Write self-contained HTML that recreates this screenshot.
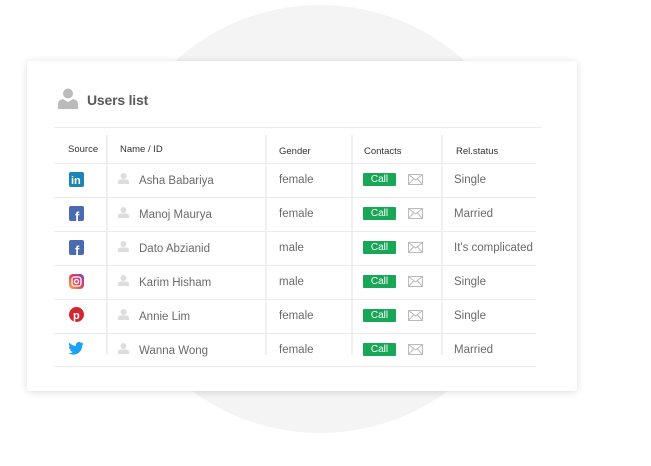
<!DOCTYPE html>
<html><head><style>
*{margin:0;padding:0;box-sizing:border-box}
body{width:651px;height:466px;background:#fff;position:relative;overflow:hidden;font-family:"Liberation Sans",sans-serif}
.circle{position:absolute;left:105px;top:5px;width:430px;height:428px;border-radius:50%;background:#f4f4f4}
.card{position:absolute;left:27px;top:61px;width:550px;height:330px;background:#fff;border-radius:3px;box-shadow:0 1px 8px rgba(0,0,0,.14)}
.abs{position:absolute}
.title{left:87px;top:92px;font-size:14px;color:#5a5a5a;font-weight:bold;letter-spacing:-.2px}
.hl{position:absolute;height:1px;background:#ececec}
.vl{position:absolute;width:2px;background:#f0f0f0;top:135px;height:220px}
.th{position:absolute;top:144px;font-size:9.5px;color:#333}
.td{position:absolute;font-size:11.5px;color:#6a6a6a;margin-top:2px}
.call{position:absolute;left:363px;width:33px;height:13px;background:#17a757;color:#fff;font-size:10px;text-align:center;line-height:14px;border-radius:1px}
.pi{position:absolute;left:118px}
.env{position:absolute;left:408px}
</style></head><body>
<div class="circle"></div>
<div class="card"></div>
<svg class="abs" style="left:58px;top:88px" width="20" height="21" viewBox="0 0 20 21"><circle cx="10" cy="5.5" r="5" fill="#bbb"/><path d="M0 21 V16 Q0 12 5 11 L10 14 L15 11 Q20 12 20 16 V21Z" fill="#bbb"/></svg>
<div class="abs title">Users list</div>
<div class="hl" style="left:54px;top:127px;width:487px"></div>
<div class="vl" style="left:106px"></div><div class="vl" style="left:265px"></div><div class="vl" style="left:351px"></div><div class="vl" style="left:441px"></div>
<div class="th" style="left:68px">Source</div>
<div class="th" style="left:120px">Name / ID</div>
<div class="th" style="left:279px;top:146px">Gender</div>
<div class="th" style="left:364px;top:146px">Contacts</div>
<div class="th" style="left:456px;top:146px">Rel.status</div>
<div class="hl" style="left:54px;top:163px;width:482px"></div>
<div class="hl" style="left:54px;top:197px;width:482px"></div>
<div class="hl" style="left:54px;top:231px;width:482px"></div>
<div class="hl" style="left:54px;top:265px;width:482px"></div>
<div class="hl" style="left:54px;top:299px;width:482px"></div>
<div class="hl" style="left:54px;top:333px;width:482px"></div>
<div class="hl" style="left:54px;top:366px;width:482px"></div>

<svg class="abs" style="left:69px;top:172px" width="15" height="15"><rect width="15" height="15" rx="2" fill="#1b86b5"/><text x="2" y="12" font-size="11" font-weight="bold" fill="#fff" font-family="Liberation Sans">in</text></svg>
<svg class="abs" style="left:69px;top:206px" width="15" height="15"><rect width="15" height="15" rx="2" fill="#4a6bb1"/><text x="6" y="15" font-size="13" font-weight="bold" fill="#fff" font-family="Liberation Sans">f</text></svg>
<svg class="abs" style="left:69px;top:240px" width="15" height="15"><rect width="15" height="15" rx="2" fill="#4a6bb1"/><text x="6" y="15" font-size="13" font-weight="bold" fill="#fff" font-family="Liberation Sans">f</text></svg>
<svg class="abs" style="left:69px;top:274px" width="15" height="15"><defs><linearGradient id="ig" x1="0" y1="1" x2="1" y2="0"><stop offset="0" stop-color="#fdb44a"/><stop offset=".5" stop-color="#e4405f"/><stop offset="1" stop-color="#7a3fc2"/></linearGradient></defs><rect width="15" height="15" rx="4" fill="url(#ig)"/><rect x="3" y="3" width="9" height="9" rx="2.5" fill="none" stroke="#fff" stroke-width="1.3"/><circle cx="7.5" cy="7.5" r="2" fill="none" stroke="#fff" stroke-width="1.3"/></svg>
<svg class="abs" style="left:69px;top:307px" width="15" height="15"><circle cx="7.5" cy="7.5" r="7.5" fill="#d22630"/><text x="4" y="12" font-size="11" font-weight="bold" fill="#fff" font-family="Liberation Sans">p</text></svg>
<svg class="abs" style="left:68px;top:342px" width="16" height="13" viewBox="0 0 24 20"><path d="M24 2.4a9.8 9.8 0 0 1-2.8.8A4.9 4.9 0 0 0 23.3.4a9.9 9.9 0 0 1-3.1 1.2A4.9 4.9 0 0 0 11.8 6 14 14 0 0 1 1.7.9a4.9 4.9 0 0 0 1.5 6.6A4.9 4.9 0 0 1 1 6.9a4.9 4.9 0 0 0 3.9 4.8 4.9 4.9 0 0 1-2.2.1 4.9 4.9 0 0 0 4.6 3.4A9.9 9.9 0 0 1 0 17.2 14 14 0 0 0 7.5 19.5c9.1 0 14-7.5 14-14v-.6A10 10 0 0 0 24 2.4z" fill="#1da1f2"/></svg>

<svg class="pi" style="top:173px" width="11" height="11"><circle cx="5.5" cy="3" r="3" fill="#ddd"/><path d="M0 11V9Q0 6.5 3 6.5H8Q11 6.5 11 9V11Z" fill="#ddd"/></svg>
<svg class="pi" style="top:207px" width="11" height="11"><circle cx="5.5" cy="3" r="3" fill="#ddd"/><path d="M0 11V9Q0 6.5 3 6.5H8Q11 6.5 11 9V11Z" fill="#ddd"/></svg>
<svg class="pi" style="top:241px" width="11" height="11"><circle cx="5.5" cy="3" r="3" fill="#ddd"/><path d="M0 11V9Q0 6.5 3 6.5H8Q11 6.5 11 9V11Z" fill="#ddd"/></svg>
<svg class="pi" style="top:275px" width="11" height="11"><circle cx="5.5" cy="3" r="3" fill="#ddd"/><path d="M0 11V9Q0 6.5 3 6.5H8Q11 6.5 11 9V11Z" fill="#ddd"/></svg>
<svg class="pi" style="top:309px" width="11" height="11"><circle cx="5.5" cy="3" r="3" fill="#ddd"/><path d="M0 11V9Q0 6.5 3 6.5H8Q11 6.5 11 9V11Z" fill="#ddd"/></svg>
<svg class="pi" style="top:343px" width="11" height="11"><circle cx="5.5" cy="3" r="3" fill="#ddd"/><path d="M0 11V9Q0 6.5 3 6.5H8Q11 6.5 11 9V11Z" fill="#ddd"/></svg>

<div class="td" style="left:139px;top:173px">Asha Babariya</div>
<div class="td" style="left:139px;top:207px">Manoj Maurya</div>
<div class="td" style="left:139px;top:241px">Dato Abzianid</div>
<div class="td" style="left:139px;top:275px">Karim Hisham</div>
<div class="td" style="left:139px;top:309px">Annie Lim</div>
<div class="td" style="left:139px;top:343px">Wanna Wong</div>

<div class="td" style="left:279px;top:172px">female</div>
<div class="td" style="left:279px;top:206px">female</div>
<div class="td" style="left:279px;top:240px">male</div>
<div class="td" style="left:279px;top:274px">male</div>
<div class="td" style="left:279px;top:308px">female</div>
<div class="td" style="left:279px;top:342px">female</div>

<div class="call" style="top:173px">Call</div>
<div class="call" style="top:207px">Call</div>
<div class="call" style="top:241px">Call</div>
<div class="call" style="top:275px">Call</div>
<div class="call" style="top:309px">Call</div>
<div class="call" style="top:343px">Call</div>

<svg class="env" style="top:174px" width="15" height="11"><rect x=".5" y=".5" width="14" height="10" fill="none" stroke="#bbb"/><path d="M.5 .5L7.5 6L14.5 .5M.5 10.5L5.5 5M14.5 10.5L9.5 5" fill="none" stroke="#bbb"/></svg>
<svg class="env" style="top:208px" width="15" height="11"><rect x=".5" y=".5" width="14" height="10" fill="none" stroke="#bbb"/><path d="M.5 .5L7.5 6L14.5 .5M.5 10.5L5.5 5M14.5 10.5L9.5 5" fill="none" stroke="#bbb"/></svg>
<svg class="env" style="top:242px" width="15" height="11"><rect x=".5" y=".5" width="14" height="10" fill="none" stroke="#bbb"/><path d="M.5 .5L7.5 6L14.5 .5M.5 10.5L5.5 5M14.5 10.5L9.5 5" fill="none" stroke="#bbb"/></svg>
<svg class="env" style="top:276px" width="15" height="11"><rect x=".5" y=".5" width="14" height="10" fill="none" stroke="#bbb"/><path d="M.5 .5L7.5 6L14.5 .5M.5 10.5L5.5 5M14.5 10.5L9.5 5" fill="none" stroke="#bbb"/></svg>
<svg class="env" style="top:310px" width="15" height="11"><rect x=".5" y=".5" width="14" height="10" fill="none" stroke="#bbb"/><path d="M.5 .5L7.5 6L14.5 .5M.5 10.5L5.5 5M14.5 10.5L9.5 5" fill="none" stroke="#bbb"/></svg>
<svg class="env" style="top:344px" width="15" height="11"><rect x=".5" y=".5" width="14" height="10" fill="none" stroke="#bbb"/><path d="M.5 .5L7.5 6L14.5 .5M.5 10.5L5.5 5M14.5 10.5L9.5 5" fill="none" stroke="#bbb"/></svg>

<div class="td" style="left:454px;top:172px">Single</div>
<div class="td" style="left:454px;top:206px">Married</div>
<div class="td" style="left:454px;top:240px">It's complicated</div>
<div class="td" style="left:454px;top:274px">Single</div>
<div class="td" style="left:454px;top:308px">Single</div>
<div class="td" style="left:454px;top:342px">Married</div>
</body></html>
